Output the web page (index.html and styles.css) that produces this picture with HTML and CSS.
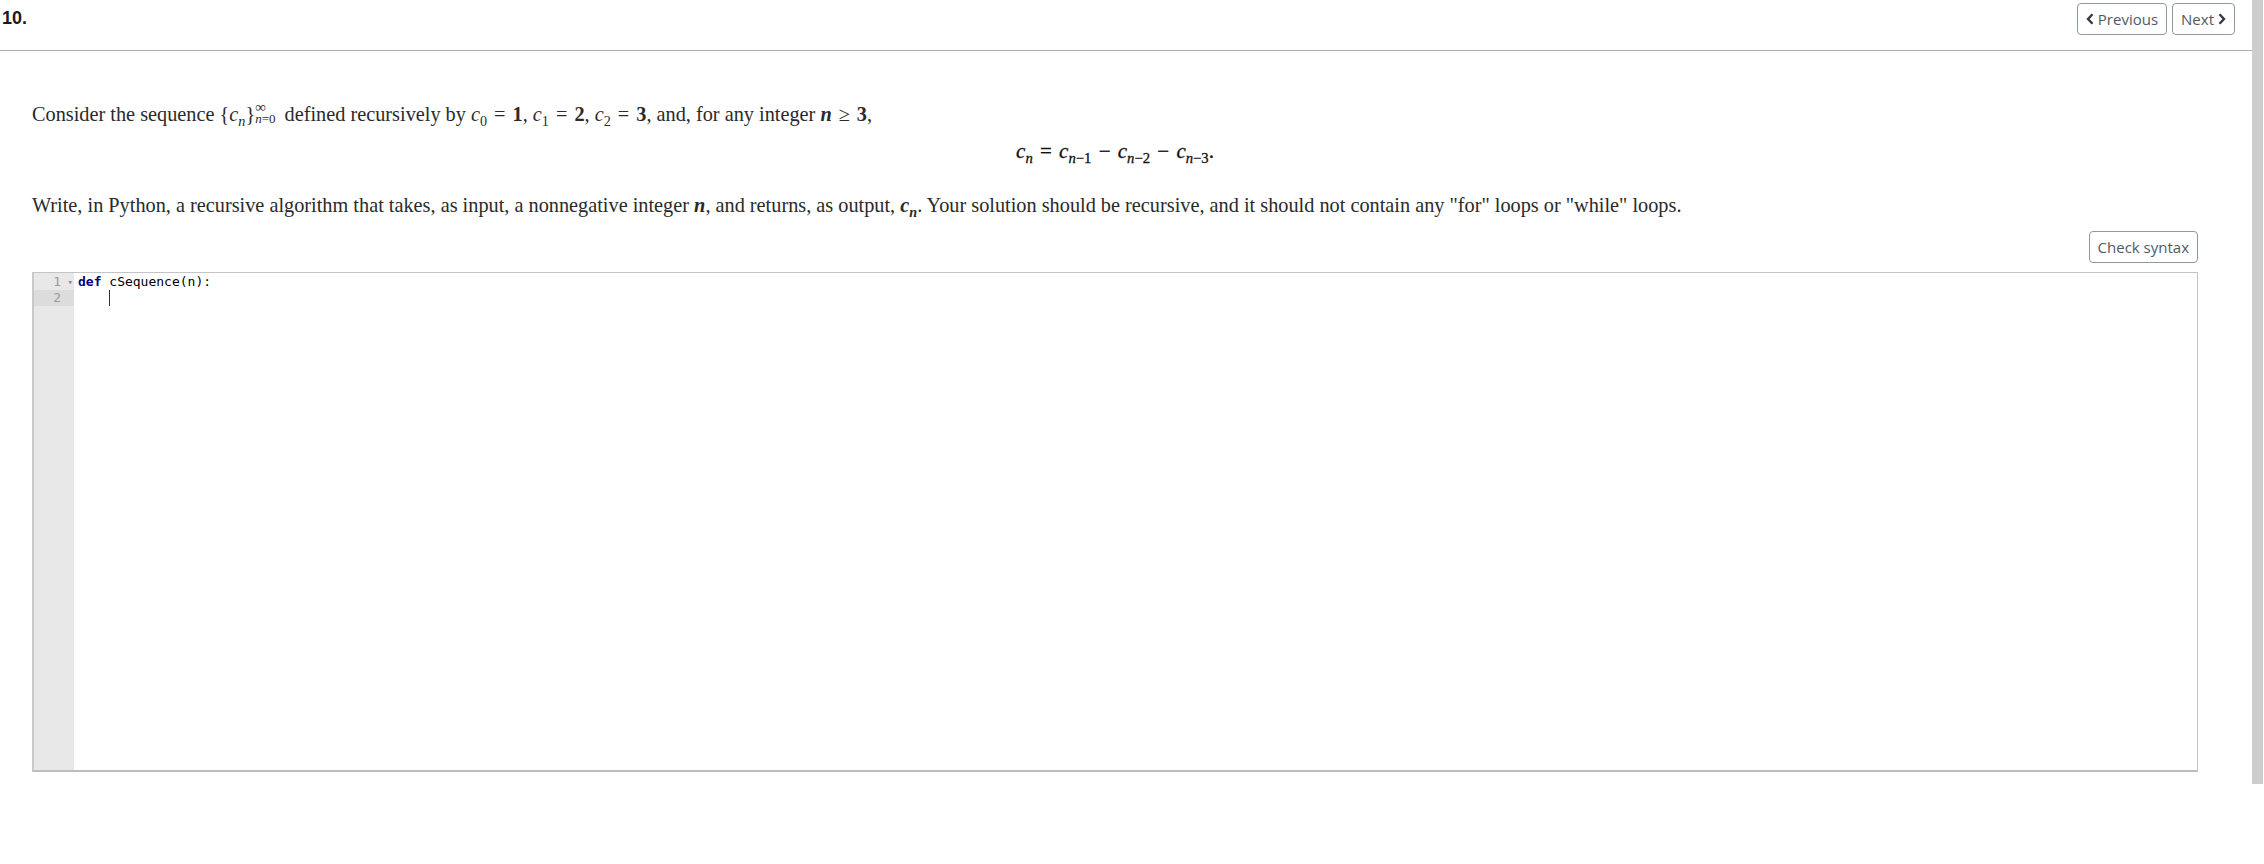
FILE: index.html
```html
<!DOCTYPE html>
<html lang="en">

<head>
    <meta charset="UTF-8">
    <meta name="viewport" content="width=device-width, initial-scale=1.0">
    <title>Question 10</title>
    <link rel="stylesheet" href="styles.css">
</head>

<body>
    <div class="page">
        <div class="frame">
            <header class="topbar">
                <span class="qnum">10.</span>
                <nav class="pager">
                    <button class="btn">
                        <svg class="chev" viewBox="0 0 8 12" width="8" height="12"><path d="M6.5 1.2 L2 6 L6.5 10.8" /></svg>
                        Previous
                    </button>
                    <button class="btn">
                        Next
                        <svg class="chev" viewBox="0 0 8 12" width="8" height="12"><path d="M1.5 1.2 L6 6 L1.5 10.8" /></svg>
                    </button>
                </nav>
            </header>

            <main class="question">
                <p class="prompt">
                    Consider the sequence
                    <span class="m">{<i>c</i><sub><i>n</i></sub>}<span class="supsub"><span class="up">∞</span><span class="down"><i>n</i>=0</span></span></span>
                    defined recursively by
                    <span class="m"><i>c</i><sub>0</sub><span class="op">=</span><b>1</b>,</span>
                    <span class="m"><i>c</i><sub>1</sub><span class="op">=</span><b>2</b>,</span>
                    <span class="m"><i>c</i><sub>2</sub><span class="op">=</span><b>3</b>,</span>
                    and, for any integer <span class="m"><b><i>n</i></b><span class="op">≥</span><b>3</b>,</span>
                </p>

                <div class="display-eq">
                    <i>c</i><sub><i>n</i></sub> = <i>c</i><sub><i>n</i>−1</sub> − <i>c</i><sub><i>n</i>−2</sub> − <i>c</i><sub><i>n</i>−3</sub>.
                </div>

                <p class="prompt">
                    Write, in Python, a recursive algorithm that takes, as input, a nonnegative integer <b class="m"><i>n</i></b>, and returns, as output, <b class="m"><i>c</i><sub><i>n</i></sub></b>. Your solution should be recursive, and it should not contain any "for" loops or "while" loops.
                </p>

                <div class="toolbar">
                    <button class="btn">Check syntax</button>
                </div>

                <div class="editor">
                    <div class="gutter">
                        <div class="ln">1<span class="fold">▾</span></div>
                        <div class="ln active">2</div>
                    </div>
                    <div class="code">
                        <div class="line"><span class="kw">def</span> cSequence(n):</div>
                        <div class="line">    <span class="cursor"></span></div>
                    </div>
                </div>
            </main>
        </div>
        <div class="scrollbar"></div>
    </div>
</body>

</html>
```

FILE: styles.css
```css
body {
    margin: 0;
    background: #ffffff;
    color: #222222;
}

.page {
    display: flex;
    align-items: flex-start;
}

.frame {
    flex: 1;
}

.scrollbar {
    width: 11px;
    height: 784px;
    background-color: #cdcdcd;
    margin-right: 1px;
}

.topbar {
    display: flex;
    justify-content: space-between;
    align-items: flex-start;
    height: 50px;
    border-bottom: 1px solid #aab1b8;
    padding: 0 17px 0 2px;
}

.qnum {
    font-family: "Liberation Sans", Arial, sans-serif;
    font-weight: bold;
    font-size: 18px;
    margin-top: 8px;
    color: #1a1a1a;
}

.pager {
    display: flex;
    gap: 5px;
    margin-top: 3px;
}

.btn {
    display: flex;
    align-items: center;
    gap: 4px;
    height: 32px;
    padding: 0 8px;
    font-family: "Open Sans", sans-serif;
    font-size: 15px;
    color: #505a64;
    background: #ffffff;
    border: 1px solid #8d99a3;
    border-radius: 4px;
}

.chev {
    fill: none;
    stroke: #333b44;
    stroke-width: 2.4;
}

.question {
    padding: 0 54px 0 32px;
}

.prompt {
    font-family: "Liberation Serif", "Times New Roman", serif;
    font-size: 20.3px;
    line-height: 30px;
    margin: 0;
    color: #2a2a2a;
}

.prompt:first-child {
    margin-top: 48px;
}

.m {
    white-space: nowrap;
}

.op {
    margin: 0 7px;
}

sub,
sup {
    font-size: 0.7em;
    line-height: 0;
}

.supsub {
    display: inline-flex;
    flex-direction: column;
    vertical-align: 9px;
    margin-right: 4px;
}

.supsub .up {
    font-size: 15px;
    line-height: 12px;
}

.supsub .down {
    font-size: 13px;
    line-height: 12px;
}

.display-eq {
    font-family: "Liberation Serif", "Times New Roman", serif;
    font-size: 21px;
    line-height: 30px;
    text-align: center;
    margin: 7px 0 24px;
    color: #111111;
    -webkit-text-stroke: 0.3px #111111;
    word-spacing: 2px;
}

.toolbar {
    display: flex;
    justify-content: flex-end;
    margin: 11px 0 9px;
}

.editor {
    display: flex;
    height: 497px;
    border: 1px solid #c4c4c4;
    border-bottom: 2px solid #bdbdbd;
    border-left: 2px solid #c9c9c9;
    font-family: "DejaVu Sans Mono", monospace;
    font-size: 13px;
    line-height: 16px;
}

.gutter {
    width: 40px;
    background-color: #e8e8e8;
    color: #9a9a9a;
    padding-top: 1px;
}

.ln {
    position: relative;
    text-align: right;
    padding-right: 13px;
    height: 16px;
}

.ln.active {
    background-color: #dcdcdc;
}

.fold {
    position: absolute;
    right: 1px;
    top: 0;
    font-size: 9px;
    color: #888888;
}

.code {
    flex: 1;
    padding: 1px 0 0 4px;
    color: #000000;
}

.line {
    white-space: pre;
    height: 16px;
}

.kw {
    color: #000080;
    font-weight: bold;
}

.cursor {
    display: inline-block;
    width: 1px;
    height: 16px;
    background: #333333;
    vertical-align: top;
}
```
